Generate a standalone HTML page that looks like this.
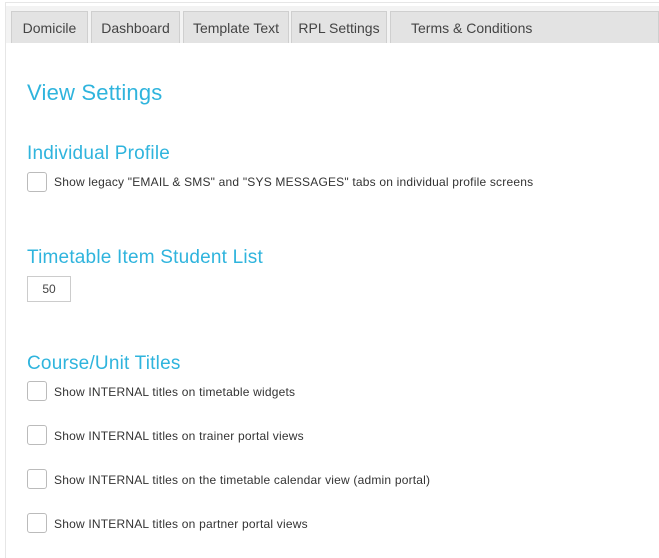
<html><head><style>
body{margin:0;width:659px;height:558px;background:#fff;font-family:"Liberation Sans",sans-serif;position:relative;overflow:hidden}
.frame{position:absolute;left:5px;top:2px;right:0;bottom:0;border-left:1px solid #e6e6e6;border-top:1px solid #e6e6e6}
.strip{position:absolute;left:6px;top:6px;right:0;height:37px;background:#f3f3f3}
.tab{position:absolute;top:11px;height:32px;background:#e3e3e3;border:1px solid #cfcfcf;border-bottom:none;box-sizing:border-box;font-size:14px;color:#444;text-align:center;line-height:32px}
h{position:absolute;left:27px;color:#2fb4dd;white-space:nowrap}
.cb{position:absolute;left:27px;width:20px;height:20px;border:1px solid #bbb;border-radius:3px;box-sizing:border-box;background:#fff}
.t{position:absolute;left:54px;font-size:12px;color:#333;white-space:nowrap;letter-spacing:0.2px}
</style></head><body>
<div class="frame"></div><div class="strip"></div>
<div class="tab" style="left:11px;width:77px">Domicile</div>
<div class="tab" style="left:91px;width:89px">Dashboard</div>
<div class="tab" style="left:183px;width:106px">Template Text</div>
<div class="tab" style="left:291px;width:96px">RPL Settings</div>
<div class="tab" style="left:390px;width:269px;text-align:left;padding-left:20px">Terms &amp; Conditions</div>
<h style="top:80px;font-size:22px;letter-spacing:0.2px">View Settings</h>
<h style="top:143px;font-size:19px;letter-spacing:0.2px">Individual Profile</h>
<div class="cb" style="top:172px"></div><div class="t" style="top:175px">Show legacy "EMAIL &amp; SMS" and "SYS MESSAGES" tabs on individual profile screens</div>
<h style="top:247px;font-size:19px;letter-spacing:0.2px">Timetable Item Student List</h>
<div style="position:absolute;left:27px;top:276px;width:44px;height:26px;border:1px solid #ccc;box-sizing:border-box;font-size:12px;color:#444;text-align:center;line-height:24px">50</div>
<h style="top:353px;font-size:19px;letter-spacing:0.2px">Course/Unit Titles</h>
<div class="cb" style="top:381px"></div><div class="t" style="top:385px">Show INTERNAL titles on timetable widgets</div>
<div class="cb" style="top:425px"></div><div class="t" style="top:429px">Show INTERNAL titles on trainer portal views</div>
<div class="cb" style="top:469px"></div><div class="t" style="top:473px">Show INTERNAL titles on the timetable calendar view (admin portal)</div>
<div class="cb" style="top:513px"></div><div class="t" style="top:517px">Show INTERNAL titles on partner portal views</div>
</body></html>
